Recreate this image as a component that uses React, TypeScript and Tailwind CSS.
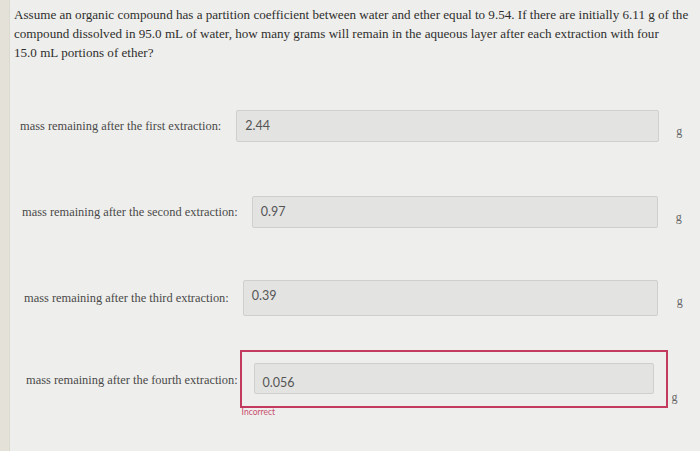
const serif = { fontFamily: '"Liberation Serif", "Times New Roman", serif' };

function Row({
  label,
  value,
  labelPl,
  inputW,
  inputMl,
  h,
  gMl,
  mt,
}: {
  label: string;
  value: string;
  labelPl: string;
  inputW: string;
  inputMl: string;
  h: string;
  gMl: string;
  mt: string;
}) {
  return (
    <div className={`flex items-start ${mt}`}>
      <div className={`flex items-center ${h} ${labelPl}`}>
        <span className="text-[12.4px] text-[#4a4a4a] whitespace-nowrap" style={serif}>
          {label}
        </span>
      </div>
      <div
        className={`${inputMl} ${inputW} ${h} bg-[#e3e3e2] border border-[#cfcfcd] rounded-[2px] flex items-start pt-[6px] pl-[8px]`}
      >
        <span className="text-[12.5px] text-[#555] font-['Lato']">{value}</span>
      </div>
      <span className={`${gMl} mt-[12px] text-[12px] text-[#666]`} style={serif}>
        g
      </span>
    </div>
  );
}

export default function App() {
  return (
    <div className="w-[700px] h-[451px] flex bg-[#eeeeec] overflow-hidden">
      <div className="w-[10px] h-full bg-[#e4e1d8] border-r border-[#dcd9d0]" />
      <div className="flex-1 flex flex-col">
        <p
          className="pl-[4px] pt-[5px] pr-[2px] text-[13.1px] leading-[19px] text-[#2e2e2e] whitespace-nowrap"
          style={serif}
        >
          Assume an organic compound has a partition coefficient between water and ether equal to 9.54. If there are initially 6.11 g of the
          <br />
          compound dissolved in 95.0 mL of water, how many grams will remain in the aqueous layer after each extraction with four
          <br />
          15.0 mL portions of ether?
        </p>

        <Row
          label="mass remaining after the first extraction:"
          value="2.44"
          labelPl="pl-[10px]"
          inputMl="ml-[15px]"
          inputW="w-[423px]"
          h="h-[32px]"
          gMl="ml-[17px]"
          mt="mt-[48px]"
        />
        <Row
          label="mass remaining after the second extraction:"
          value="0.97"
          labelPl="pl-[12px]"
          inputMl="ml-[14px]"
          inputW="w-[406px]"
          h="h-[32px]"
          gMl="ml-[18px]"
          mt="mt-[54px]"
        />
        <Row
          label="mass remaining after the third extraction:"
          value="0.39"
          labelPl="pl-[14px]"
          inputMl="ml-[14px]"
          inputW="w-[415px]"
          h="h-[36px]"
          gMl="ml-[19px]"
          mt="mt-[52px]"
        />

        <div className="flex items-start mt-[34px]">
          <div className="flex items-center h-[58px] pl-[16px] pt-[3px]">
            <span className="text-[12.4px] text-[#4a4a4a] whitespace-nowrap" style={serif}>
              mass remaining after the fourth extraction:
            </span>
          </div>
          <div className="flex flex-col ml-[2px]">
            <div className="w-[428px] h-[58px] border-2 border-[#c23a5e] pl-[12px] pt-[11px]">
              <div className="w-[400px] h-[31px] bg-[#e3e3e2] border border-[#cfcfcd] rounded-[2px] pt-[5px] pl-[8px]">
                <span className="text-[12.5px] text-[#555] font-['Lato']">0.056</span>
              </div>
            </div>
            <span className="mt-[-2px] ml-[2px] text-[8.5px] text-[#c9506e] font-['Lato']">Incorrect</span>
          </div>
          <span className="ml-[4px] mt-[38px] text-[12px] text-[#666]" style={serif}>
            g
          </span>
        </div>
      </div>
    </div>
  );
}
